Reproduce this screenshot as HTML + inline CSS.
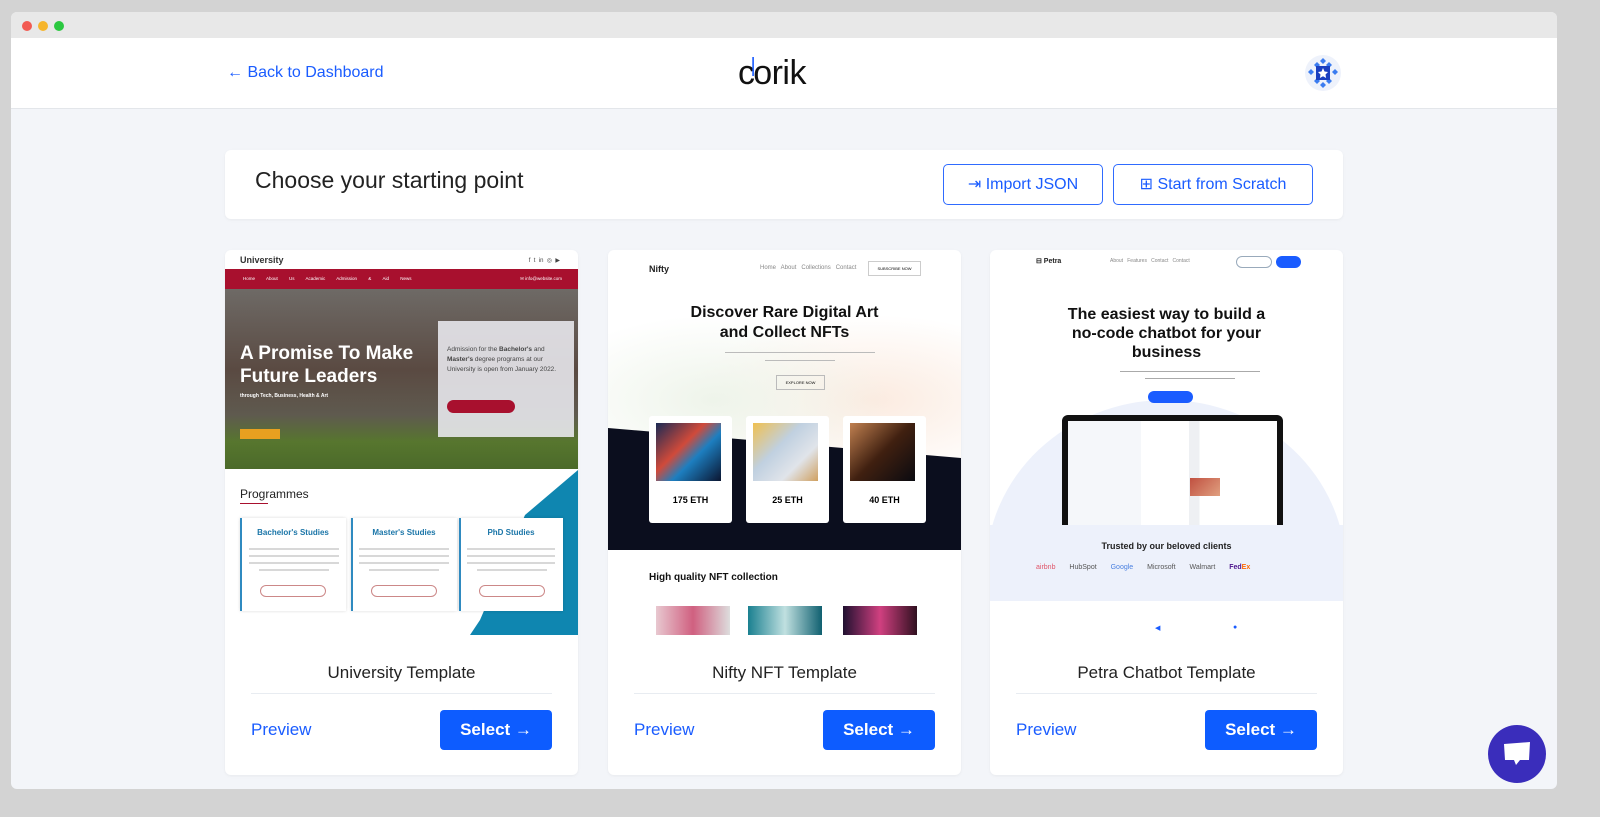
<!DOCTYPE html>
<html><head><meta charset="utf-8"><style>
*{box-sizing:border-box;margin:0;padding:0}
body{width:1600px;height:817px;background:#d3d3d3;font-family:"Liberation Sans",sans-serif;position:relative;overflow:hidden}
.win{position:absolute;left:11px;top:12px;width:1546px;height:777px;background:#f3f5f9;border-radius:6px;overflow:hidden}
.tb{height:26px;background:#e8e8e8;position:relative}
.dot{position:absolute;top:9px;width:10px;height:10px;border-radius:50%}
.hdr{height:71px;background:#fff;border-bottom:1px solid #e3e6ea;position:relative}
.abs{position:absolute}
.back{left:216px;top:26px;color:#1a5cff;font-size:16px}
.logo{left:727px;top:16px;font-size:34px;color:#111;letter-spacing:-0.5px}
.card{position:absolute;background:#fff;border-radius:6px;box-shadow:0 1px 3px rgba(0,0,0,.05)}
.btn{position:absolute;border:1px solid #2f6bff;border-radius:5px;color:#1a5cff;font-size:16px;height:41px;line-height:39px;text-align:center}
.tc{top:238px;width:353px;height:525px}
.thumb{position:absolute;left:0;top:0;width:353px;height:385px;overflow:hidden;border-radius:6px 6px 0 0}
.tt{position:absolute;top:413px;width:100%;text-align:center;font-size:17px;color:#222}
.div{position:absolute;left:26px;right:26px;top:443px;border-top:1px solid #e8ecf1}
.pv{position:absolute;left:26px;top:470px;color:#1a5cff;font-size:17px}
.sel{position:absolute;left:215px;top:460px;width:112px;height:40px;background:#0d5cff;border-radius:4px;color:#fff;font-size:17px;font-weight:bold;text-align:center;line-height:40px}
.s{font-size:6px;color:#888}
.ln{position:absolute;height:2px;background:#d8d8d8}
.pill{position:absolute;height:12px;border:1px solid #c88;border-radius:6px;width:66px}
</style></head><body>
<div class="win">
 <div class="tb"><div class="dot" style="left:11px;background:#f25a52"></div><div class="dot" style="left:27px;background:#f6b52c"></div><div class="dot" style="left:43px;background:#2bc840"></div></div>
 <div class="hdr">
  <div class="abs back">← Back to Dashboard</div>
  <div class="abs logo">c<span style="color:#1a5cff;font-size:20px;position:relative;top:-12px;margin-left:-4px;margin-right:-2px">|</span>orik</div>
  <svg class="abs" style="left:1294px;top:17px" width="36" height="36" viewBox="0 0 36 36"><circle cx="18" cy="18" r="18" fill="#eef2fb"/>
   <g fill="#3b7cf0"><path d="M18 3l3 3-3 3-3-3z"/><path d="M12 7l3 3-3 3-3-3z"/><path d="M24 7l3 3-3 3-3-3z"/><path d="M6 14l3 3-3 3-3-3z"/><path d="M30 14l3 3-3 3-3-3z"/><path d="M12 23l3 3-3 3-3-3z"/><path d="M24 23l3 3-3 3-3-3z"/><path d="M18 27l3 3-3 3-3-3z"/></g>
   <rect x="11" y="11" width="14" height="14" fill="#1a3fc0"/><path d="M18 13l1.5 3.5 3.5.5-2.5 2.5.6 3.5-3.1-1.7-3.1 1.7.6-3.5-2.5-2.5 3.5-.5z" fill="#fff"/></svg>
 </div>
 <div class="card" style="left:214px;top:138px;width:1118px;height:69px">
  <div class="abs" style="left:30px;top:17px;font-size:23px;color:#222">Choose your starting point</div>
  <div class="btn" style="left:718px;top:14px;width:160px">⇥ Import JSON</div>
  <div class="btn" style="left:888px;top:14px;width:200px">⊞ Start from Scratch</div>
 </div>

 <!-- University -->
 <div class="card tc" style="left:214px">
  <div class="thumb">
   <div class="abs" style="left:15px;top:5px;font-size:9px;font-weight:bold;color:#333">University</div>
   <div class="abs s" style="right:18px;top:7px;color:#444">f &nbsp;t &nbsp;in &nbsp;◎ &nbsp;▶</div>
   <div class="abs" style="left:0;top:19px;width:353px;height:20px;background:#a8102e"></div>
   <div class="abs" style="left:18px;top:26px;font-size:4.5px;color:#fff;word-spacing:10px">Home About&nbsp;Us Academic Admission&nbsp;&amp;&nbsp;Aid News</div>
   <div class="abs" style="right:16px;top:26px;font-size:4.5px;color:#fff">✉ info@website.com</div>
   <div class="abs" style="left:0;top:39px;width:353px;height:180px;background:linear-gradient(180deg,#6e6a66 0%,#5a4a42 45%,#5f5a4f 70%,#57762e 85%,#4b6a2a 100%)"></div>
   <div class="abs" style="left:15px;top:92px;color:#fff;font-size:19px;font-weight:bold;line-height:23px">A Promise To Make<br>Future Leaders</div>
   <div class="abs" style="left:15px;top:143px;color:#fff;font-size:5px;font-weight:bold">through Tech, Business, Health &amp; Art</div>
   <div class="abs" style="left:15px;top:179px;width:40px;height:10px;background:#e8a020"></div>
   <div class="abs" style="left:213px;top:71px;width:136px;height:116px;background:rgba(235,235,240,.88)"></div>
   <div class="abs" style="left:222px;top:95px;width:118px;font-size:6.5px;color:#444;line-height:10px">Admission for the <b>Bachelor's</b> and <b>Master's</b> degree programs at our University is open from January 2022.</div>
   <div class="abs" style="left:222px;top:150px;width:68px;height:13px;border-radius:7px;background:#a8102e"></div>
   <div class="abs" style="left:15px;top:237px;font-size:12px;color:#222">Programmes</div>
   <div class="abs" style="left:15px;top:253px;width:28px;height:1px;background:#a8102e"></div>
   <svg class="abs" style="left:245px;top:220px" width="108" height="165"><polygon points="108,0 108,165 0,165 10,150 55,45" fill="#0f86b0"/></svg>
   <div class="abs" style="left:15px;top:268px;width:106px;height:93px;background:#fff;border-left:2px solid #2f8ac0;box-shadow:0 0 3px rgba(0,0,0,.15)"></div>
   <div class="abs" style="left:126px;top:268px;width:106px;height:93px;background:#fff;border-left:2px solid #2f8ac0;box-shadow:0 0 3px rgba(0,0,0,.15)"></div>
   <div class="abs" style="left:234px;top:268px;width:104px;height:93px;background:#fff;border-left:2px solid #2f8ac0;box-shadow:0 0 3px rgba(0,0,0,.15)"></div>
   <div class="abs" style="left:15px;top:278px;width:106px;text-align:center;font-size:8px;font-weight:bold;color:#1a75a8">Bachelor's Studies</div>
   <div class="abs" style="left:126px;top:278px;width:106px;text-align:center;font-size:8px;font-weight:bold;color:#1a75a8">Master's Studies</div>
   <div class="abs" style="left:234px;top:278px;width:104px;text-align:center;font-size:8px;font-weight:bold;color:#1a75a8">PhD Studies</div>
   <div class="ln" style="left:24px;top:298px;width:90px"></div><div class="ln" style="left:24px;top:305px;width:90px"></div><div class="ln" style="left:24px;top:312px;width:90px"></div><div class="ln" style="left:34px;top:319px;width:70px"></div>
   <div class="ln" style="left:134px;top:298px;width:90px"></div><div class="ln" style="left:134px;top:305px;width:90px"></div><div class="ln" style="left:134px;top:312px;width:90px"></div><div class="ln" style="left:144px;top:319px;width:70px"></div>
   <div class="ln" style="left:242px;top:298px;width:88px"></div><div class="ln" style="left:242px;top:305px;width:88px"></div><div class="ln" style="left:242px;top:312px;width:88px"></div><div class="ln" style="left:252px;top:319px;width:70px"></div>
   <div class="pill" style="left:35px;top:335px"></div><div class="pill" style="left:146px;top:335px"></div><div class="pill" style="left:254px;top:335px"></div>
  </div>
  <div class="tt">University Template</div><div class="div"></div><div class="pv">Preview</div><div class="sel">Select →</div>
 </div>

 <!-- Nifty -->
 <div class="card tc" style="left:597px">
  <div class="thumb">
   <div class="abs" style="left:41px;top:14px;font-size:9px;font-weight:bold;color:#222">Nifty</div>
   <div class="abs s" style="left:152px;top:15px">Home &nbsp; About &nbsp; Collections &nbsp; Contact</div>
   <div class="abs" style="left:260px;top:11px;width:53px;height:15px;border:1px solid #ccc;font-size:4px;text-align:center;line-height:13px">SUBSCRIBE NOW</div>
   <div class="abs" style="left:0;top:30px;width:353px;height:200px;background:radial-gradient(ellipse at 30% 60%,#eef4ea 0%,rgba(255,255,255,0) 50%),radial-gradient(ellipse at 75% 60%,#fbebe0 0%,rgba(255,255,255,0) 50%)"></div>
   <div class="abs" style="left:0;top:53px;width:353px;text-align:center;font-size:16px;font-weight:bold;color:#111;line-height:20px">Discover Rare Digital Art<br>and Collect NFTs</div>
   <div class="ln" style="left:117px;top:102px;width:150px;height:1px;background:#bbb"></div>
   <div class="ln" style="left:157px;top:110px;width:70px;height:1px;background:#bbb"></div>
   <div class="abs" style="left:168px;top:125px;width:49px;height:15px;border:1px solid #bbb;font-size:4px;text-align:center;line-height:13px">EXPLORE NOW</div>
   <svg class="abs" style="left:0;top:178px" width="353" height="122"><polygon points="0,0 353,30 353,122 0,122" fill="#0b0e1e"/></svg>
   <div class="abs" style="left:41px;top:166px;width:83px;height:107px;background:#fff;border-radius:3px"></div>
   <div class="abs" style="left:138px;top:166px;width:83px;height:107px;background:#fff;border-radius:3px"></div>
   <div class="abs" style="left:235px;top:166px;width:83px;height:107px;background:#fff;border-radius:3px"></div>
   <div class="abs" style="left:48px;top:173px;width:65px;height:58px;background:linear-gradient(135deg,#1a2a55,#d04a3a 40%,#1d7fc0 60%,#0b1530)"></div>
   <div class="abs" style="left:145px;top:173px;width:65px;height:58px;background:linear-gradient(135deg,#f0c050,#c0d0e0 40%,#e0e4ea 70%,#d0a060)"></div>
   <div class="abs" style="left:242px;top:173px;width:65px;height:58px;background:linear-gradient(135deg,#c08050,#402010 50%,#0a0a10)"></div>
   <div class="abs" style="left:41px;top:245px;width:83px;text-align:center;font-size:9px;font-weight:bold">175 ETH</div>
   <div class="abs" style="left:138px;top:245px;width:83px;text-align:center;font-size:9px;font-weight:bold">25 ETH</div>
   <div class="abs" style="left:235px;top:245px;width:83px;text-align:center;font-size:9px;font-weight:bold">40 ETH</div>
   <div class="abs" style="left:41px;top:322px;font-size:10px;font-weight:bold;color:#111">High quality NFT collection</div>
   <div class="abs" style="left:48px;top:356px;width:74px;height:30px;background:linear-gradient(90deg,#e8c8d0,#d06080,#ddd)"></div>
   <div class="abs" style="left:140px;top:356px;width:74px;height:30px;background:linear-gradient(90deg,#1a8090,#c0e0e0,#106070)"></div>
   <div class="abs" style="left:235px;top:356px;width:74px;height:30px;background:linear-gradient(90deg,#201030,#d04080,#301020)"></div>
  </div>
  <div class="tt">Nifty NFT Template</div><div class="div"></div><div class="pv">Preview</div><div class="sel">Select →</div>
 </div>

 <!-- Petra -->
 <div class="card tc" style="left:979px">
  <div class="thumb">
   <div class="abs" style="left:46px;top:7px;font-size:7px;font-weight:bold;color:#222">⊟ Petra</div>
   <div class="abs s" style="left:120px;top:8px;font-size:5px">About &nbsp; Features &nbsp; Contact &nbsp; Contact</div>
   <div class="abs" style="left:246px;top:6px;width:36px;height:12px;border:1px solid #9ab;border-radius:6px"></div>
   <div class="abs" style="left:286px;top:6px;width:25px;height:12px;background:#1a5cff;border-radius:6px"></div>
   <svg class="abs" style="left:0;top:150px" width="353" height="150"><ellipse cx="176" cy="170" rx="180" ry="170" fill="#edf1fb"/></svg>
   <div class="abs" style="left:0;top:55px;width:353px;text-align:center;font-size:16px;font-weight:bold;color:#111;line-height:19px">The easiest way to build a<br>no-code chatbot for your<br>business</div>
   <div class="ln" style="left:130px;top:121px;width:140px;height:1px;background:#aaa"></div>
   <div class="ln" style="left:155px;top:128px;width:90px;height:1px;background:#aaa"></div>
   <div class="abs" style="left:158px;top:141px;width:45px;height:12px;background:#1a5cff;border-radius:6px"></div>
   <div class="abs" style="left:72px;top:165px;width:221px;height:110px;background:#111;border-radius:6px 6px 0 0"></div>
   <div class="abs" style="left:78px;top:171px;width:209px;height:104px;background:linear-gradient(90deg,#f5f7fa 0 35%,#fff 35% 58%,#eef0f3 58% 63%,#fff 63%)"></div>
   <div class="abs" style="left:200px;top:228px;width:30px;height:18px;background:linear-gradient(135deg,#c05040,#e0a080)"></div>
   <div class="abs" style="left:0;top:275px;width:353px;height:76px;background:#edf1fb"></div>
   <div class="abs" style="left:0;top:291px;width:353px;text-align:center;font-size:9px;font-weight:bold;color:#222">Trusted by our beloved clients</div>
   <div class="abs" style="left:46px;top:314px;font-size:7px;color:#555;word-spacing:12px"><span style="color:#e0566a">airbnb</span> HubSpot <span style="color:#4a80e0">Google</span> Microsoft Walmart <b style="color:#4d148c">Fed<span style="color:#f60">Ex</span></b></div>
   <div class="abs" style="left:165px;top:374px;font-size:7px;color:#1a5cff">◀</div>
   <div class="abs" style="left:243px;top:374px;font-size:7px;color:#1a5cff">●</div>
  </div>
  <div class="tt">Petra Chatbot Template</div><div class="div"></div><div class="pv">Preview</div><div class="sel">Select →</div>
 </div>
</div>
<div class="abs" style="left:1488px;top:725px;width:58px;height:58px;border-radius:50%;background:#3a2dbb"></div>
<svg class="abs" style="left:1501px;top:740px" width="32" height="30"><path d="M3 4 L29 2 L28 20 L19 20 L15 25 L13 20 L4 20 Z" fill="#fff"/></svg>
</body></html>
